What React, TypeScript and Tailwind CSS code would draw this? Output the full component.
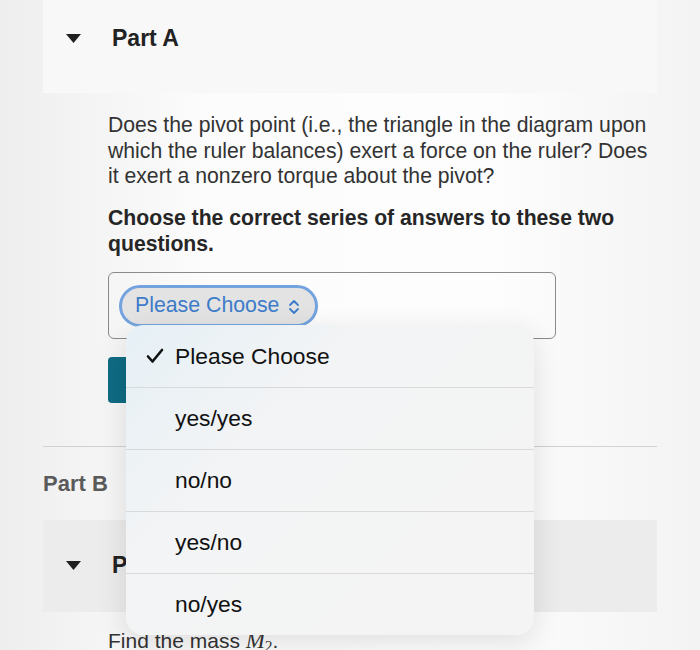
const options = ["Please Choose", "yes/yes", "no/no", "yes/no", "no/yes"];

function Caret() {
  return (
    <svg width="15" height="10" viewBox="0 0 15 10" className="shrink-0">
      <path d="M0 0 L15 0 L7.5 9 Z" fill="#1f1f1f" />
    </svg>
  );
}

function UpDown() {
  return (
    <svg width="12" height="16" viewBox="0 0 12 16" className="ml-[9px] mt-[2px]">
      <path
        d="M2 6 L6 2 L10 6 M2 10 L6 14 L10 10"
        fill="none"
        stroke="#3d7cc9"
        strokeWidth="1.8"
        strokeLinecap="round"
        strokeLinejoin="round"
      />
    </svg>
  );
}

function Check() {
  return (
    <svg width="18" height="16" viewBox="0 0 18 16">
      <path
        d="M2 8.5 L6.5 13.5 L16 2"
        fill="none"
        stroke="#111"
        strokeWidth="2.6"
        strokeLinecap="round"
        strokeLinejoin="round"
      />
    </svg>
  );
}

export default function App() {
  return (
    <div
      className="relative w-[700px] h-[650px] overflow-hidden bg-[linear-gradient(to_right,#eeeeee,#fcfcfc_30%,#fdfdfd_70%,#f3f3f3)] text-[#2b2b2b]"
      style={{ fontFamily: '"Liberation Sans", Arial, sans-serif' }}
    >
      <div className="mx-[43px]">
        <div className="h-[93px] bg-[#f8f8f8] flex items-center pl-[23px] pb-[16px] gap-[31px]">
          <Caret />
          <span className="text-[23px] font-bold text-[#222]">Part A</span>
        </div>

        <div className="pl-[65px] pr-[2px] pt-[19px]">
          <p className="text-[21.2px] leading-[25.5px] text-[#333]">
            Does the pivot point (i.e., the triangle in the diagram upon which the ruler
            balances) exert a force on the ruler? Does it exert a nonzero torque about the
            pivot?
          </p>
          <p className="mt-[16px] text-[21.2px] leading-[26px] font-bold text-[#262626] pr-[30px]">
            Choose the correct series of answers to these two questions.
          </p>

          <div className="mt-[15px] w-[448px] h-[67px] border border-[#8a8a8a] rounded-[6px] px-[10px] pt-[12px]">
            <div className="inline-flex items-center h-[42px] pl-[13px] pr-[15px] rounded-full bg-[#e3e3e4] border-[3px] border-[#73a3de]">
              <span className="text-[21.3px] text-[#3d7cc9]">Please Choose</span>
              <UpDown />
            </div>
          </div>

          <div className="mt-[18px] w-[120px] h-[46px] rounded-[4px] bg-[#0f6b83]" />
        </div>

        <div className="mt-[43px] border-t border-[#d2d2d2]" />

        <div className="mt-[24px] text-[22px] leading-[26px] font-bold text-[#5a5a5a]">Part B</div>

        <div className="mt-[23px] h-[92px] bg-[#ececec] flex items-center pl-[23px] gap-[31px]">
          <Caret />
          <span className="text-[23px] font-bold text-[#222]">Part B</span>
        </div>

        <p className="pl-[65px] mt-[16px] text-[21px] leading-[25px] text-[#333]">
          Find the mass <i style={{ fontFamily: '"Liberation Serif", serif' }} className="text-[23px]">M</i>
          <sub style={{ fontFamily: '"Liberation Serif", serif' }} className="text-[15px]">2</sub>.
        </p>
      </div>

      <div className="absolute left-[126px] top-[325px] w-[408px] rounded-[18px] overflow-hidden bg-[linear-gradient(135deg,#e6f0f6,#f3f4f5_35%,#f4f4f4)] shadow-[0_8px_30px_rgba(0,0,0,0.12)]">
        {options.map((o, i) => (
          <div
            key={o}
            className={`flex items-center h-[62px] ${i > 0 ? "border-t border-[#d9d9d9]" : ""}`}
          >
            <div className="w-[49px] flex justify-end pr-[11px]">{i === 0 && <Check />}</div>
            <span className="text-[22.8px] text-[#111]">{o}</span>
          </div>
        ))}
      </div>
    </div>
  );
}
